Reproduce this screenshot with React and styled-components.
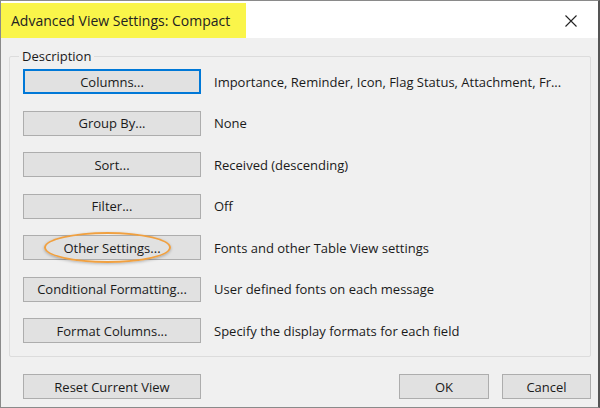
import React from "react";
import styled, { createGlobalStyle } from "styled-components";

const G = createGlobalStyle`
  body { margin: 0; background: #fff; }
  * { box-sizing: border-box; }
`;
const Win = styled.div`
  width: 600px; height: 408px; border: 1px solid #8a8a8a; border-right: 2px solid #555;
  background: #f0f0f0; font-family: "Open Sans", "Noto Sans", sans-serif; color: #1a1a1a;
  display: flex; flex-direction: column;
`;
const TitleBar = styled.div`
  height: 37px; background: #fff; display: flex; align-items: stretch; justify-content: space-between;
  padding-top: 2px;
`;
const Title = styled.div`
  background: #faf54a; padding: 0 0 0 10px; width: 245px; display: flex; align-items: center;
  font-size: 14px; color: #222;
`;
const Close = styled.div`
  width: 46px; display: flex; align-items: center; justify-content: center; margin-right: 4px;
`;
const Body = styled.div`
  flex: 1; padding: 9px 7px 0 8px; display: flex; flex-direction: column;
`;
const Group = styled.fieldset`
  margin: 0; border: 1px solid #dcdcdc; border-radius: 2px; padding: 4px 0 6px 13px; height: 310px;
  display: flex; flex-direction: column; gap: 16.5px;
`;
const Legend = styled.legend`
  font-size: 13px; padding: 0 3px; margin-left: -4px;
`;
const Row = styled.div`
  display: flex; align-items: center; gap: 13px; font-size: 13px; white-space: nowrap;
`;
const Btn = styled.button`
  width: ${p => p.w || 178}px; height: 25px; flex: none; background: #e1e1e1;
  border: ${p => (p.primary ? "2px solid #0078d7" : "1px solid #adadad")};
  font-family: inherit; font-size: 13px; color: #1a1a1a; padding: 0; position: relative;
`;
const Ring = styled.span`
  position: absolute; left: 20px; top: -4px; width: 127px; height: 31px;
  border: 2px solid #f0a040; border-radius: 50%; box-shadow: 0 1px 3px rgba(0,0,0,0.25);
`;
const Footer = styled.div`
  display: flex; align-items: center; padding: 17px 0 0 14px; gap: 13px;
`;
const Spacer = styled.div` flex: 1; `;

const rows = [
  ["Columns...", "Importance, Reminder, Icon, Flag Status, Attachment, Fr...", true],
  ["Group By...", "None"],
  ["Sort...", "Received (descending)"],
  ["Filter...", "Off"],
  ["Other Settings...", "Fonts and other Table View settings", false, true],
  ["Conditional Formatting...", "User defined fonts on each message"],
  ["Format Columns...", "Specify the display formats for each field"],
];

export default function App() {
  return (
    <>
      <G />
      <Win>
        <TitleBar>
          <Title>Advanced View Settings: Compact</Title>
          <Close>
            <svg width="12" height="12" viewBox="0 0 12 12"><path d="M0.5 0.5L11.5 11.5M11.5 0.5L0.5 11.5" stroke="#222" strokeWidth="1.1" /></svg>
          </Close>
        </TitleBar>
        <Body>
          <Group>
            <Legend>Description</Legend>
            {rows.map(([b, t, p, ring]) => (
              <Row key={b}>
                <Btn primary={p}>{b}{ring && <Ring />}</Btn>
                <span>{t}</span>
              </Row>
            ))}
          </Group>
          <Footer>
            <Btn>Reset Current View</Btn>
            <Spacer />
            <Btn w={90}>OK</Btn>
            <Btn w={89}>Cancel</Btn>
          </Footer>
        </Body>
      </Win>
    </>
  );
}
